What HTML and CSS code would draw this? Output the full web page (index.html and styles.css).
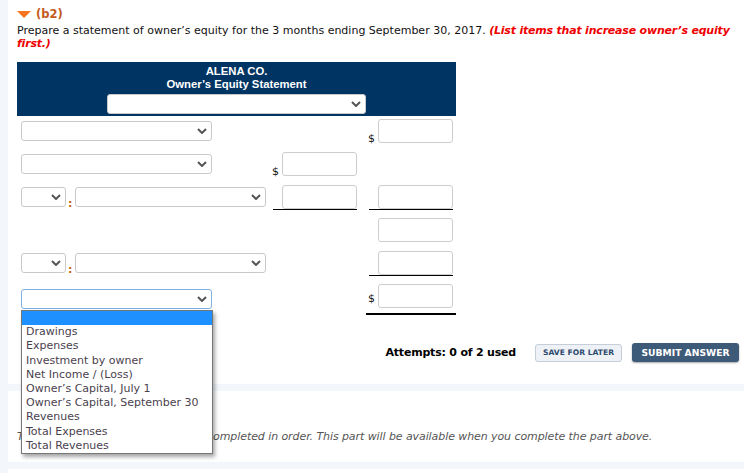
FILE: index.html
```html
<!DOCTYPE html>
<html>
<head>
<meta charset="utf-8">
<link rel="stylesheet" href="styles.css">
</head>
<body>
<div class="page">
  <section class="part part-active">
    <div class="part-title">
      <svg class="caret" width="14" height="7" viewBox="0 0 14 7"><path d="M0 0 H14 L7 7 Z" fill="#f5761f"/></svg>
      <span class="part-label">(b2)</span>
    </div>
    <p class="prompt">Prepare a statement of owner’s equity for the 3 months ending September 30, 2017. <em class="hint">(List items that increase owner’s equity first.)</em></p>

    <div class="statement">
      <div class="st-head">
        <div class="st-company">ALENA CO.</div>
        <div class="st-name">Owner’s Equity Statement</div>
        <div class="sel sel-head"><svg class="chev" width="10" height="6" viewBox="0 0 10 6"><path d="M1 1 L5 5 L9 1" /></svg></div>
      </div>

      <div class="st-row">
        <div class="lbl"><div class="sel sel-std"><svg class="chev" width="10" height="6" viewBox="0 0 10 6"><path d="M1 1 L5 5 L9 1" /></svg></div></div>
        <div class="colb"></div>
        <div class="colc"><div class="amt"><span class="dol">$</span><span class="inp"></span></div></div>
      </div>

      <div class="st-row">
        <div class="lbl"><div class="sel sel-std"><svg class="chev" width="10" height="6" viewBox="0 0 10 6"><path d="M1 1 L5 5 L9 1" /></svg></div></div>
        <div class="colb"><div class="amt"><span class="dol">$</span><span class="inp"></span></div></div>
        <div class="colc"></div>
      </div>

      <div class="st-row">
        <div class="lbl">
          <div class="sel sel-sm"><svg class="chev" width="10" height="6" viewBox="0 0 10 6"><path d="M1 1 L5 5 L9 1" /></svg></div>
          <span class="colon">:</span>
          <div class="sel sel-std"><svg class="chev" width="10" height="6" viewBox="0 0 10 6"><path d="M1 1 L5 5 L9 1" /></svg></div>
        </div>
        <div class="colb"><div class="amt amt-ul"><span class="inp"></span></div></div>
        <div class="colc"><div class="amt amt-ul"><span class="inp"></span></div></div>
      </div>

      <div class="st-row">
        <div class="lbl"></div>
        <div class="colb"></div>
        <div class="colc"><div class="amt"><span class="inp"></span></div></div>
      </div>

      <div class="st-row">
        <div class="lbl">
          <div class="sel sel-sm"><svg class="chev" width="10" height="6" viewBox="0 0 10 6"><path d="M1 1 L5 5 L9 1" /></svg></div>
          <span class="colon">:</span>
          <div class="sel sel-std"><svg class="chev" width="10" height="6" viewBox="0 0 10 6"><path d="M1 1 L5 5 L9 1" /></svg></div>
        </div>
        <div class="colb"></div>
        <div class="colc"><div class="amt amt-ul"><span class="inp"></span></div></div>
      </div>

      <div class="st-row st-total">
        <div class="lbl">
          <div class="sel sel-std sel-focus"><svg class="chev" width="10" height="6" viewBox="0 0 10 6"><path d="M1 1 L5 5 L9 1" /></svg>
            <ul class="dropdown">
              <li class="opt opt-hl">&nbsp;</li>
              <li class="opt">Drawings</li>
              <li class="opt">Expenses</li>
              <li class="opt">Investment by owner</li>
              <li class="opt">Net Income / (Loss)</li>
              <li class="opt">Owner’s Capital, July 1</li>
              <li class="opt">Owner’s Capital, September 30</li>
              <li class="opt">Revenues</li>
              <li class="opt">Total Expenses</li>
              <li class="opt">Total Revenues</li>
            </ul>
          </div>
        </div>
        <div class="colb"></div>
        <div class="colc"><div class="amt amt-total"><span class="dol">$</span><span class="inp"></span></div></div>
      </div>
    </div>

    <div class="actions">
      <span class="attempts">Attempts: 0 of 2 used</span>
      <span class="btn btn-save">SAVE FOR LATER</span>
      <span class="btn btn-submit">SUBMIT ANSWER</span>
    </div>
  </section>

  <section class="part part-locked">
    <p class="locked-msg">The parts of this question must be completed in order. This part will be available when you complete the part above.</p>
  </section>

  <section class="part part-next"></section>
</div>
</body>
</html>
```

FILE: styles.css
```css
* { box-sizing: border-box; }
html, body { margin: 0; padding: 0; }
body {
  background: #f3f6fa;
  font-family: "DejaVu Sans", Verdana, sans-serif;
  font-size: 11px;
  color: #222;
}
.page {
  margin-left: 8px;
  display: flex;
  flex-direction: column;
  gap: 7px;
}
.part { background: #fff; }
.part-active {
  height: 384px;
  padding: 8px 1px 0 9px;
}
.part-title {
  display: flex;
  align-items: center;
  gap: 5px;
  height: 12px;
}
.caret { display: block; margin-top: 1px; }
.part-label {
  font-weight: bold;
  font-size: 11.5px;
  color: #c55a1d;
}
.prompt {
  margin: 4px 0 0 0;
  line-height: 13px;
  color: #111;
}
.hint {
  color: #ee0000;
  font-weight: bold;
  font-style: italic;
  letter-spacing: -0.2px;
}

.statement {
  margin-top: 12px;
  width: 439px;
  position: relative;
}
.st-head {
  background: #003462;
  color: #fff;
  height: 54px;
  padding-top: 3px;
  text-align: center;
  font-family: "Liberation Sans", Arial, sans-serif;
  font-weight: bold;
  font-size: 11.3px;
  line-height: 13px;
}
.st-head .sel-head {
  margin: 3px auto 0 auto;
  width: 259px;
}

.sel {
  height: 20px;
  background: #fff;
  border: 1px solid #c9c9c9;
  border-radius: 3px;
  display: flex;
  align-items: center;
  justify-content: flex-end;
  padding-right: 4px;
  position: relative;
  flex: none;
}
.chev { display: block; }
.chev path { fill: none; stroke: #555; stroke-width: 2; }
.sel-std { width: 191px; }
.sel-sm { width: 45px; }
.sel-focus { border-color: #7fb0e2; }

.st-row {
  display: grid;
  grid-template-columns: 256px 93px 90px;
  height: 33px;
}
.lbl {
  display: flex;
  align-items: flex-end;
  padding-left: 4px;
  padding-top: 5px;
  height: 25px;
}
.colon {
  width: 9px;
  padding-left: 2px;
  color: #c8640a;
  font-weight: bold;
  line-height: 10px;
  margin-bottom: -2px;
}
.amt {
  margin-top: 3px;
  width: 84px;
  display: flex;
  align-items: flex-end;
}
.colc .amt { margin-left: 3px; }
.dol {
  width: 8px;
  line-height: 12px;
  margin-bottom: -2px;
  margin-left: -1px;
  color: #111;
}
.inp {
  margin-left: auto;
  width: 75px;
  height: 24px;
  border: 1px solid #cdcdcd;
  border-radius: 3px;
  background: #fff;
}
.amt-ul { border-bottom: 1px solid #000; }
.st-total { height: 35px; }
.st-total .lbl { padding-top: 8px; height: 28px; }
.amt-total {
  margin-left: 0 !important;
  width: 90px;
  padding: 0 3px 5px 3px;
  border-bottom: 2px solid #000;
}
.amt-total .dol { margin-bottom: 3px; }

.dropdown {
  position: absolute;
  left: -1px;
  top: 20px;
  width: 192px;
  margin: 0;
  padding: 0;
  list-style: none;
  background: #fff;
  border: 1px solid #767676;
  box-shadow: 2px 3px 4px rgba(0,0,0,0.35);
  z-index: 5;
}
.opt {
  height: 14.2px;
  line-height: 14.2px;
  padding-left: 4px;
  color: #4a3f4e;
  white-space: nowrap;
}
.opt-hl { background: #1e90ff; }

.actions {
  margin-top: 27px;
  margin-right: 4px;
  display: flex;
  justify-content: flex-end;
  align-items: center;
  height: 19px;
}
.attempts {
  font-weight: bold;
  color: #000;
  margin-right: 19px;
  letter-spacing: -0.2px;
}
.btn {
  font-weight: bold;
  display: flex;
  align-items: center;
  justify-content: center;
  border-radius: 3px;
}
.btn-save {
  width: 87px;
  height: 18px;
  font-size: 7.6px;
  color: #2e4a6d;
  background: #eef2f7;
  border: 1px solid #c5cdd8;
  margin-right: 10px;
}
.btn-submit {
  width: 107px;
  height: 19px;
  font-size: 9.2px;
  color: #fff;
  background: #3e5a79;
  box-shadow: 0 1px 2px rgba(0,0,0,0.35);
}

.part-locked {
  height: 71px;
  padding: 39px 9px 0 9px;
}
.locked-msg {
  margin: 0;
  font-style: italic;
  color: #555;
  line-height: 13px;
  letter-spacing: -0.08px;
}
.part-next { height: 20px; }
```
